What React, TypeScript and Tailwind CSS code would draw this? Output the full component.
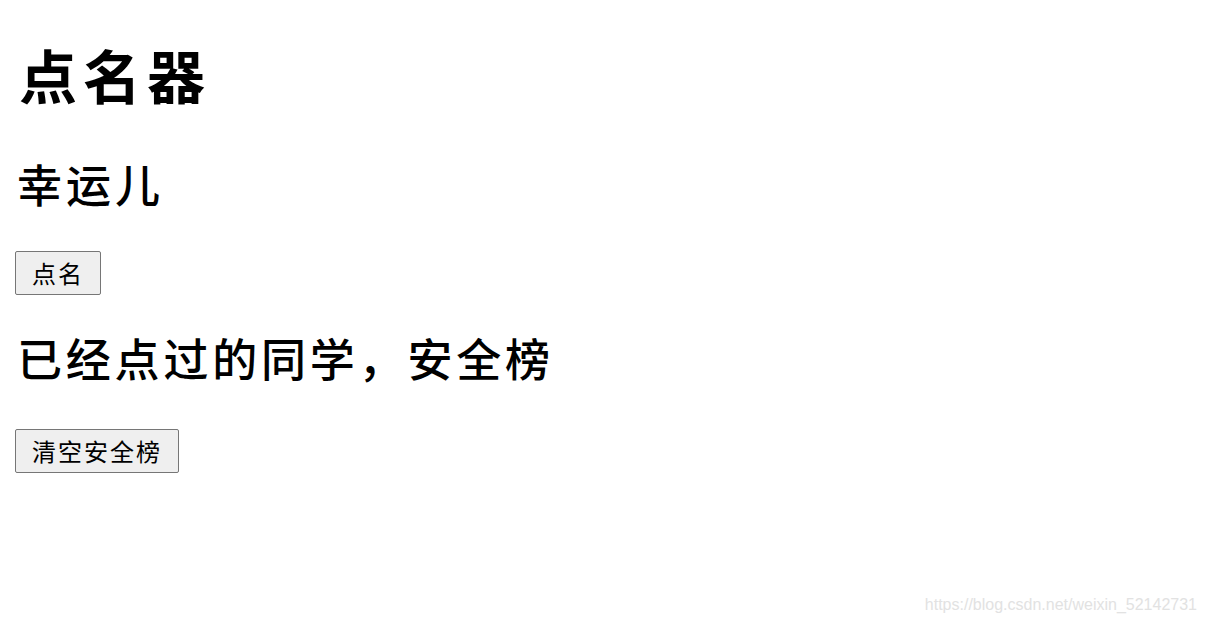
import { useState } from 'react';

const cjk = "font-['Noto_Sans_CJK_SC',sans-serif]";

export default function App() {
  const [lucky, setLucky] = useState('幸运儿');

  return (
    <div className={`relative h-[626px] w-full bg-white text-black ${cjk}`}>
      <div className="flex flex-col items-start pl-[15px] pt-[44px]">
        <h1 className="ml-[4px] text-[58px] font-bold leading-[60px] tracking-[6px]">点名器</h1>
        <h2 className="mt-[56px] ml-[2px] text-[45px] font-medium leading-[48px] tracking-[4px]">{lucky}</h2>
        <button
          onClick={() => setLucky('幸运儿')}
          className="mt-[43px] h-[44px] rounded-[2px] border border-[#767676] bg-[#efefef] px-[16px] text-[24px] leading-none tracking-[2px]"
        >
          点名
        </button>
        <h2 className="mt-[39px] ml-[2px] text-[45px] font-medium leading-[48px] tracking-[3.8px]">
          已经点过的同学，安全榜
        </h2>
        <button className="mt-[47px] h-[44px] rounded-[2px] border border-[#767676] bg-[#efefef] px-[16px] text-[24px] leading-none tracking-[2px]">
          清空安全榜
        </button>
      </div>
      <div className="absolute bottom-[9px] right-[8px] font-['Liberation_Sans',sans-serif] text-[16px] text-[#e2e2e2]">
        https://blog.csdn.net/weixin_52142731
      </div>
    </div>
  );
}
